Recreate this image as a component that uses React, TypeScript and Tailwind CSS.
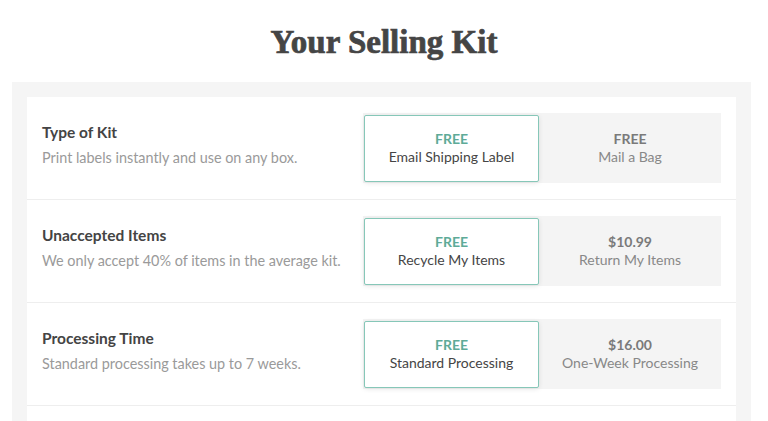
import React from "react";

type Opt = { price: string; label: string };
type Row = { title: string; desc: string; a: Opt; b: Opt };

const rows: Row[] = [
  {
    title: "Type of Kit",
    desc: "Print labels instantly and use on any box.",
    a: { price: "FREE", label: "Email Shipping Label" },
    b: { price: "FREE", label: "Mail a Bag" },
  },
  {
    title: "Unaccepted Items",
    desc: "We only accept 40% of items in the average kit.",
    a: { price: "FREE", label: "Recycle My Items" },
    b: { price: "$10.99", label: "Return My Items" },
  },
  {
    title: "Processing Time",
    desc: "Standard processing takes up to 7 weeks.",
    a: { price: "FREE", label: "Standard Processing" },
    b: { price: "$16.00", label: "One-Week Processing" },
  },
];

export default function App() {
  return (
    <div
      className="w-full min-h-[421px] bg-white overflow-hidden"
      style={{ fontFamily: "Lato, 'Open Sans', sans-serif" }}
    >
      <h1
        className="h-[82px] pt-[20px] text-center text-[33px] leading-[44px] font-bold text-[#454545] [-webkit-text-stroke:0.7px_#454545]"
        style={{ fontFamily: "'Liberation Serif', 'DejaVu Serif', serif" }}
      >
        Your Selling Kit
      </h1>
      <div className="ml-[12px] w-[739px] bg-[#f5f5f5] px-[15px] pt-[15px] pb-[15px]">
        <div className="bg-white">
          {rows.map((r) => (
            <div
              key={r.title}
              className="flex h-[103px] items-center justify-between border-b border-[#eeeeee] px-[15px]"
            >
              <div className="flex flex-col pb-[6px]">
                <div className="text-[15.5px] leading-[20px] font-bold text-[#444444]">{r.title}</div>
                <div className="mt-[6px] text-[14.4px] leading-[20px] text-[#9a9a9a]">{r.desc}</div>
              </div>
              <div className="flex h-[70px] w-[358px] items-center bg-[#f4f4f4] pl-[1px]">
                <div className="flex h-[67px] w-[175px] flex-col items-center justify-center rounded-[2px] border border-[#86c7b8] bg-white shadow-[0_1px_5px_rgba(0,0,0,0.10)]">
                  <div className="text-[14px] leading-[18px] font-bold text-[#5eab98]">{r.a.price}</div>
                  <div className="text-[14px] leading-[18px] text-[#454545]">{r.a.label}</div>
                </div>
                <div className="flex h-full flex-1 flex-col items-center justify-center">
                  <div className="text-[14px] leading-[18px] font-bold text-[#7a7a7a]">{r.b.price}</div>
                  <div className="text-[14px] leading-[18px] text-[#888888]">{r.b.label}</div>
                </div>
              </div>
            </div>
          ))}
          <div className="h-[60px]" />
        </div>
      </div>
    </div>
  );
}
